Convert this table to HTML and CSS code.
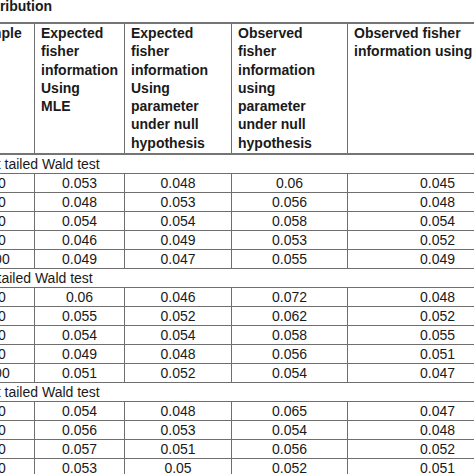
FILE: index.html
```html
<!DOCTYPE html>
<html lang="en">
<head>
  <meta charset="UTF-8" />
  <title>Wald test sizes</title>
  <link rel="stylesheet" href="styles.css">
</head>
<body>
  <div class="caption">
    <span>Table 2. Empirical size of the Wald tests for the Poisson distribution</span>
  </div>

  <table class="results">
    <colgroup>
      <col class="c-n">
      <col class="c-mle">
      <col class="c-null">
      <col class="c-obs-null">
      <col class="c-obs">
    </colgroup>
    <thead>
      <tr>
        <th>Sample size</th>
        <th>Expected fisher information Using<br>MLE</th>
        <th>Expected fisher information Using parameter under null hypothesis</th>
        <th>Observed fisher information using parameter under null hypothesis</th>
        <th>Observed fisher information using MLE</th>
      </tr>
    </thead>
    <tbody>
      <tr class="section"><td colspan="5">Right tailed Wald test</td></tr>
      <tr><td>10</td><td>0.053</td><td>0.048</td><td>0.06</td><td>0.045</td></tr>
      <tr><td>20</td><td>0.048</td><td>0.053</td><td>0.056</td><td>0.048</td></tr>
      <tr><td>30</td><td>0.054</td><td>0.054</td><td>0.058</td><td>0.054</td></tr>
      <tr><td>50</td><td>0.046</td><td>0.049</td><td>0.053</td><td>0.052</td></tr>
      <tr><td>100</td><td>0.049</td><td>0.047</td><td>0.055</td><td>0.049</td></tr>

      <tr class="section"><td colspan="5">Two tailed Wald test</td></tr>
      <tr><td>10</td><td>0.06</td><td>0.046</td><td>0.072</td><td>0.048</td></tr>
      <tr><td>20</td><td>0.055</td><td>0.052</td><td>0.062</td><td>0.052</td></tr>
      <tr><td>30</td><td>0.054</td><td>0.054</td><td>0.058</td><td>0.055</td></tr>
      <tr><td>50</td><td>0.049</td><td>0.048</td><td>0.056</td><td>0.051</td></tr>
      <tr><td>100</td><td>0.051</td><td>0.052</td><td>0.054</td><td>0.047</td></tr>

      <tr class="section"><td colspan="5">Right tailed Wald test</td></tr>
      <tr><td>10</td><td>0.054</td><td>0.048</td><td>0.065</td><td>0.047</td></tr>
      <tr><td>20</td><td>0.056</td><td>0.053</td><td>0.054</td><td>0.048</td></tr>
      <tr><td>30</td><td>0.057</td><td>0.051</td><td>0.056</td><td>0.052</td></tr>
      <tr><td>50</td><td>0.053</td><td>0.05</td><td>0.052</td><td>0.051</td></tr>
    </tbody>
  </table>
</body>
</html>
```

FILE: styles.css
```css
html, body {
  margin: 0;
  padding: 0;
  overflow: hidden;
  background: #fff;
}

body {
  font-family: "Liberation Sans", Arial, sans-serif;
  font-size: 14px;
  color: #1a1a1a;
}

/* caption is wider than the crop, so it is pinned by its right end */
.caption {
  display: flex;
  justify-content: flex-end;
  width: 52px;
  white-space: nowrap;
  margin: -2px 0 8px;
  font-size: 14px;
  line-height: 16px;
  font-weight: bold;
}

.results {
  border-collapse: collapse;
  table-layout: fixed;
  width: 562px;
  margin-left: -35px;
}

.c-n { width: 69px; }
.c-mle { width: 90px; }
.c-null { width: 107px; }
.c-obs-null { width: 116px; }
.c-obs { width: 180px; }

.results th,
.results td {
  border: 1px solid #6f6f6f;
}

.results th {
  border-top: 2px solid #747474;
  border-bottom: 2px solid #747474;
  padding: 0 4px 1px 6px;
  text-align: left;
  vertical-align: top;
  font-weight: bold;
  line-height: 18.3px;
}

.results td {
  padding: 0;
  height: 18px;
  line-height: 18px;
  text-align: center;
}

.results td:first-child {
  padding-right: 4px;
}

.section td {
  text-align: left;
  padding-left: 2px;
}
```
